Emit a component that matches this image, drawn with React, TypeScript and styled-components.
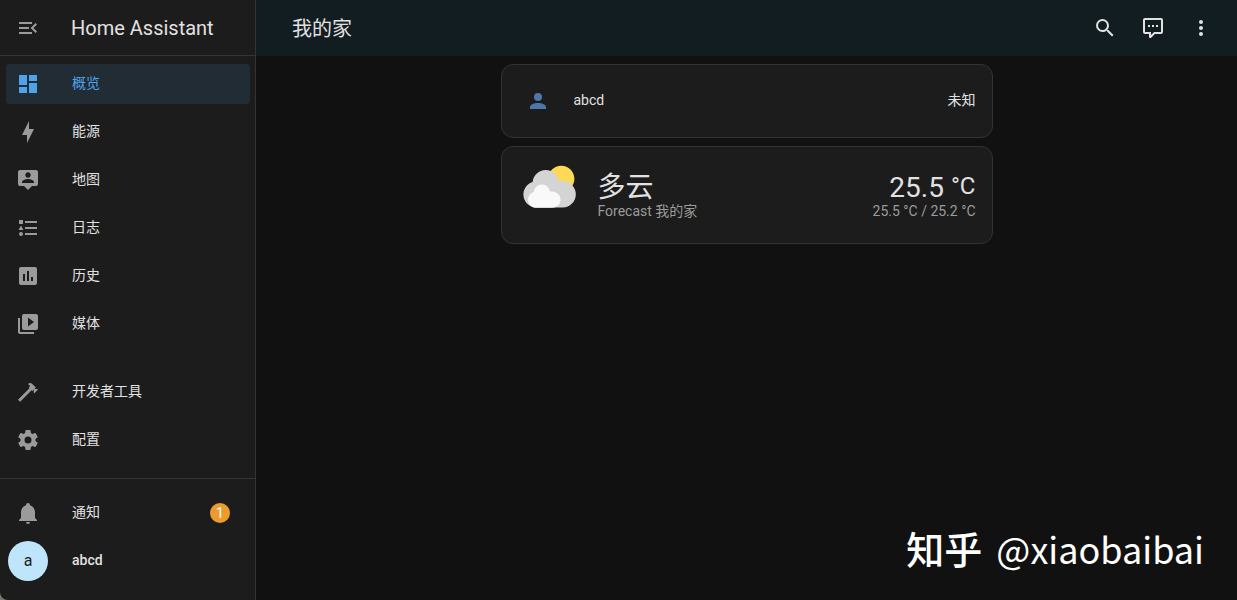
import React from "react";
import styled, { createGlobalStyle } from "styled-components";

const GlobalStyle = createGlobalStyle`
  *, *::before, *::after { box-sizing: border-box; }
  body {
    margin: 0;
    background: #111111;
    color: #e1e1e1;
    font-family: Roboto, "Noto Sans CJK SC", sans-serif;
    font-size: 14px;
    line-height: 20px;
    -webkit-font-smoothing: antialiased;
  }
`;

const icons = {
  menuOpen:
    "M21,15.61L19.59,17L14.58,12L19.59,7L21,8.39L17.44,12L21,15.61M3,6H16V8H3V6M3,13V11H13V13H3M3,18V16H16V18H3Z",
  dashboard: "M13,3V9H21V3M13,21H21V11H13M3,21H11V15H3M3,13H11V3H3V13Z",
  bolt: "M11 15H6L13 1V9H18L11 23V15Z",
  map: "M20,2H4A2,2 0 0,0 2,4V16A2,2 0 0,0 4,18H8L12,22L16,18H20A2,2 0 0,0 22,16V4A2,2 0 0,0 20,2M12,4.3C13.5,4.3 14.7,5.5 14.7,7C14.7,8.5 13.5,9.7 12,9.7C10.5,9.7 9.3,8.5 9.3,7C9.3,5.5 10.5,4.3 12,4.3M18,15H6V14.1C6,12.1 10,11 12,11C14,11 18,12.1 18,14.1V15Z",
  list: "M5,9.5L7.5,14H2.5L5,9.5M3,4H7V8H3V4M5,20A2,2 0 0,0 7,18A2,2 0 0,0 5,16A2,2 0 0,0 3,18A2,2 0 0,0 5,20M9,5V7H21V5H9M9,19H21V17H9V19M9,13H21V11H9V13Z",
  chart:
    "M9 17H7V10H9V17M13 17H11V7H13V17M17 17H15V13H17V17M19 3H5C3.89 3 3 3.89 3 5V19C3 20.1 3.89 21 5 21H19C20.1 21 21 20.1 21 19V5C21 3.89 20.1 3 19 3Z",
  media:
    "M4,6H2V20A2,2 0 0,0 4,22H18V20H4V6M20,2H8A2,2 0 0,0 6,4V16A2,2 0 0,0 8,18H20A2,2 0 0,0 22,16V4A2,2 0 0,0 20,2M12,14.5V5.5L18,10L12,14.5Z",
  hammer:
    "M2 19.63L13.43 8.2L12.72 7.5L14.14 6.07L12 3.89C13.2 2.7 15.09 2.7 16.27 3.89L19.87 7.5L18.45 8.91H21.29L22 9.62L18.45 13.21L17.74 12.5V9.62L16.27 11.04L15.56 10.33L4.13 21.76L2 19.63Z",
  cog: "M12,15.5A3.5,3.5 0 0,1 8.5,12A3.5,3.5 0 0,1 12,8.5A3.5,3.5 0 0,1 15.5,12A3.5,3.5 0 0,1 12,15.5M19.43,12.97C19.47,12.65 19.5,12.33 19.5,12C19.5,11.67 19.47,11.34 19.43,11L21.54,9.37C21.73,9.22 21.78,8.95 21.66,8.73L19.66,5.27C19.54,5.05 19.27,4.96 19.05,5.05L16.56,6.05C16.04,5.66 15.5,5.32 14.87,5.07L14.5,2.42C14.46,2.18 14.25,2 14,2H10C9.75,2 9.54,2.18 9.5,2.42L9.13,5.07C8.5,5.32 7.96,5.66 7.44,6.05L4.95,5.05C4.73,4.96 4.46,5.05 4.34,5.27L2.34,8.73C2.21,8.95 2.27,9.22 2.46,9.37L4.57,11C4.53,11.34 4.5,11.67 4.5,12C4.5,12.33 4.53,12.65 4.57,12.97L2.46,14.63C2.27,14.78 2.21,15.05 2.34,15.27L4.34,18.73C4.46,18.95 4.73,19.03 4.95,18.95L7.44,17.94C7.96,18.34 8.5,18.68 9.13,18.93L9.5,21.58C9.54,21.82 9.75,22 10,22H14C14.25,22 14.46,21.82 14.5,21.58L14.87,18.93C15.5,18.67 16.04,18.34 16.56,17.94L19.05,18.95C19.27,19.03 19.54,18.95 19.66,18.73L21.66,15.27C21.78,15.05 21.73,14.78 21.54,14.63L19.43,12.97Z",
  bell: "M21,19V20H3V19L5,17V11C5,7.9 7.03,5.17 10,4.29C10,4.19 10,4.1 10,4A2,2 0 0,1 12,2A2,2 0 0,1 14,4C14,4.1 14,4.19 14,4.29C16.97,5.17 19,7.9 19,11V17L21,19M14,21A2,2 0 0,1 12,23A2,2 0 0,1 10,21",
  account:
    "M12,4A4,4 0 0,1 16,8A4,4 0 0,1 12,12A4,4 0 0,1 8,8A4,4 0 0,1 12,4M12,14C16.42,14 20,15.79 20,18V20H4V18C4,15.79 7.58,14 12,14Z",
  magnify:
    "M9.5,3A6.5,6.5 0 0,1 16,9.5C16,11.11 15.41,12.59 14.44,13.73L14.71,14H15.5L20.5,19L19,20.5L14,15.5V14.71L13.73,14.44C12.59,15.41 11.11,16 9.5,16A6.5,6.5 0 0,1 3,9.5A6.5,6.5 0 0,1 9.5,3M9.5,5C7,5 5,7 5,9.5C5,12 7,14 9.5,14C12,14 14,12 14,9.5C14,7 12,5 9.5,5Z",
  message:
    "M9,22A1,1 0 0,1 8,21V18H4A2,2 0 0,1 2,16V4C2,2.89 2.9,2 4,2H20A2,2 0 0,1 22,4V16A2,2 0 0,1 20,18H13.9L10.2,21.71C10,21.9 9.75,22 9.5,22H9M10,16V19.08L13.08,16H20V4H4V16H10M17,11H15V9H17V11M13,11H11V9H13V11M9,11H7V9H9V11Z",
  dots: "M12,16A2,2 0 0,1 14,18A2,2 0 0,1 12,20A2,2 0 0,1 10,18A2,2 0 0,1 12,16M12,10A2,2 0 0,1 14,12A2,2 0 0,1 12,14A2,2 0 0,1 10,12A2,2 0 0,1 12,10M12,4A2,2 0 0,1 14,6A2,2 0 0,1 12,8A2,2 0 0,1 10,6A2,2 0 0,1 12,4Z",
};

type IconName = keyof typeof icons;

const Svg = styled.svg`
  display: block;
  flex: none;
  width: 24px;
  height: 24px;
  fill: currentColor;
`;

const Icon = ({ name }: { name: IconName }) => (
  <Svg viewBox="0 0 24 24" aria-hidden="true">
    <path d={icons[name]} />
  </Svg>
);

const Shell = styled.div`
  display: flex;
  min-height: 100vh;
  background: #77756f;
`;

const Sidebar = styled.aside`
  display: flex;
  flex-direction: column;
  flex: none;
  width: 256px;
  background: #1c1c1c;
  border-right: 1px solid #343434;
  border-bottom-left-radius: 8px;
`;

const SidebarHeader = styled.div`
  display: flex;
  align-items: center;
  gap: 19px;
  height: 56px;
  padding: 0 4px;
  border-bottom: 1px solid #343434;
`;

const SidebarTitle = styled.span`
  font-size: 20px;
`;

const IconButton = styled.button<{ $muted?: boolean }>`
  display: flex;
  align-items: center;
  justify-content: center;
  width: 48px;
  height: 48px;
  padding: 0;
  border: 0;
  background: none;
  color: ${(p) => (p.$muted ? "#9b9b9b" : "#e1e1e1")};
  cursor: pointer;
`;

const Nav = styled.nav`
  display: flex;
  flex-direction: column;
  flex: 1;
  gap: 8px;
  padding: 8px 5px 18px 6px;
`;

const Spacer = styled.div`
  flex: 1;
`;

const NavFooter = styled.div`
  display: flex;
  flex-direction: column;
  gap: 8px;
  padding: 14px 5px 19px 6px;
  border-top: 1px solid #343434;
`;

const NavLink = styled.a<{ $active?: boolean }>`
  display: flex;
  align-items: center;
  gap: 32px;
  height: 40px;
  padding: 0 20px 0 10px;
  border-radius: 4px;
  background: ${(p) => (p.$active ? "#222c34" : "transparent")};
  color: ${(p) => (p.$active ? "#4ea3ea" : "#e1e1e1")};
  text-decoration: none;

  ${Svg} {
    color: ${(p) => (p.$active ? "#4ea3ea" : "#9b9b9b")};
  }
`;

const NavLabel = styled.span<{ $strong?: boolean }>`
  flex: 1;
  padding-bottom: 2px;
  font-weight: ${(p) => (p.$strong ? 500 : 400)};
`;

const Badge = styled.span`
  width: 20px;
  height: 20px;
  border-radius: 50%;
  background: #ee9b2d;
  color: #ffffff;
  text-align: center;
`;

const Avatar = styled.span`
  flex: none;
  width: 40px;
  height: 40px;
  margin: 0 -8px;
  border-radius: 50%;
  background: #bfe5fa;
  color: #212121;
  font-size: 16px;
  line-height: 40px;
  text-align: center;
`;

const Main = styled.div`
  flex: 1;
  min-width: 0;
  background: #111111;
`;

const Toolbar = styled.header`
  display: flex;
  align-items: center;
  height: 56px;
  padding: 0 12px 0 36px;
  background: #121d22;
`;

const ToolbarTitle = styled.h1`
  flex: 1;
  margin: 0;
  padding-top: 2px;
  font-size: 20px;
  font-weight: 400;
`;

const Cards = styled.main`
  display: flex;
  flex-direction: column;
  gap: 8px;
  max-width: 508px;
  margin: 0 auto;
  padding: 8px;
`;

const Card = styled.section`
  border: 1px solid #333333;
  border-radius: 12px;
  background: #1c1c1c;
`;

const EntityCard = styled(Card)`
  padding: 16px;
`;

const EntityRow = styled.div`
  display: flex;
  align-items: center;
  height: 40px;
`;

const EntityIcon = styled.span`
  display: flex;
  justify-content: center;
  width: 40px;
  margin-right: 16px;
  color: #4d77a8;
`;

const EntityName = styled.span`
  flex: 1;
  padding-bottom: 2px;
`;

const EntityState = styled.span`
  padding-bottom: 2px;
`;

const WeatherCard = styled(Card)`
  display: flex;
  align-items: flex-start;
  padding: 16px;
`;

const WeatherIcon = styled.svg`
  flex: none;
  width: 64px;
  height: 64px;
  margin-right: 16px;
`;

const WeatherInfo = styled.div<{ $end?: boolean }>`
  flex: 1;
  padding-top: 10px;
  text-align: ${(p) => (p.$end ? "right" : "left")};
`;

const Primary = styled.div`
  height: 30px;
  font-size: 28px;
  line-height: 30px;
`;

const Unit = styled.span`
  font-size: 24px;
  line-height: 26px;
  vertical-align: top;
`;

const Secondary = styled.div`
  color: #9b9b9b;
  line-height: 16px;
`;

const Watermark = styled.div`
  position: absolute;
  right: 33px;
  bottom: 28px;
  display: flex;
  align-items: center;
  gap: 14px;
  color: #ffffff;
  font-family: "Noto Sans CJK SC", sans-serif;
  font-size: 36px;
  line-height: 48px;
`;

const WatermarkBrand = styled.span`
  font-size: 38px;
  font-weight: 500;
`;

const menu: { icon: IconName; label: string }[] = [
  { icon: "dashboard", label: "概览" },
  { icon: "bolt", label: "能源" },
  { icon: "map", label: "地图" },
  { icon: "list", label: "日志" },
  { icon: "chart", label: "历史" },
  { icon: "media", label: "媒体" },
];

const tools: { icon: IconName; label: string }[] = [
  { icon: "hammer", label: "开发者工具" },
  { icon: "cog", label: "配置" },
];

const PartlyCloudy = () => (
  <WeatherIcon viewBox="0 0 17 17" role="img" aria-label="多云">
    <path
      fill="#fdd957"
      d="m14.981 4.2112c0 1.9244-1.56 3.4844-3.484 3.4844-1.9244 0-3.4844-1.56-3.4844-3.4844s1.56-3.484 3.4844-3.484c1.924 0 3.484 1.5596 3.484 3.484"
    />
    <path
      fill="#d4d4d4"
      d="m3.8863 5.035c-0.54892 0.16898-1.04 0.46637-1.4372 0.8636-0.63077 0.63041-1.0206 1.4933-1.0206 2.455 0 1.9251 1.5589 3.4682 3.4837 3.4682h6.9688c1.9251 0 3.484-1.5981 3.484-3.5232 0-1.9251-1.5589-3.5232-3.484-3.5232h-1.0834c-0.25294-1.6916-1.6986-2.9083-3.4463-2.9083-1.7995 0-3.2805 1.4153-3.465 3.1679"
    />
    <path
      fill="#f9f9f9"
      d="m4.1996 7.6995c-0.33902 0.10407-0.64276 0.28787-0.88794 0.5334-0.39017 0.38982-0.63147 0.92322-0.63147 1.5176 0 1.1896 0.96414 2.1431 2.1537 2.1431h4.3071c1.1896 0 2.153-0.98742 2.153-2.1777 0-1.1896-0.96344-2.1777-2.153-2.1777h-0.66992c-0.15593-1.0449-1.0499-1.7974-2.1297-1.7974-1.112 0-2.0274 0.87524-2.1417 1.9586"
    />
  </WeatherIcon>
);

export default function App() {
  return (
    <>
      <GlobalStyle />
      <Shell>
        <Sidebar>
          <SidebarHeader>
            <IconButton $muted aria-label="收起侧边栏">
              <Icon name="menuOpen" />
            </IconButton>
            <SidebarTitle>Home Assistant</SidebarTitle>
          </SidebarHeader>
          <Nav>
            {menu.map((item, i) => (
              <NavLink key={item.label} href="#" $active={i === 0}>
                <Icon name={item.icon} />
                <NavLabel>{item.label}</NavLabel>
              </NavLink>
            ))}
            <Spacer />
            {tools.map((item) => (
              <NavLink key={item.label} href="#">
                <Icon name={item.icon} />
                <NavLabel>{item.label}</NavLabel>
              </NavLink>
            ))}
          </Nav>
          <NavFooter>
            <NavLink href="#">
              <Icon name="bell" />
              <NavLabel>通知</NavLabel>
              <Badge>1</Badge>
            </NavLink>
            <NavLink href="#">
              <Avatar>a</Avatar>
              <NavLabel $strong>abcd</NavLabel>
            </NavLink>
          </NavFooter>
        </Sidebar>
        <Main>
          <Toolbar>
            <ToolbarTitle>我的家</ToolbarTitle>
            <IconButton aria-label="搜索">
              <Icon name="magnify" />
            </IconButton>
            <IconButton aria-label="对话">
              <Icon name="message" />
            </IconButton>
            <IconButton aria-label="更多">
              <Icon name="dots" />
            </IconButton>
          </Toolbar>
          <Cards>
            <EntityCard>
              <EntityRow>
                <EntityIcon>
                  <Icon name="account" />
                </EntityIcon>
                <EntityName>abcd</EntityName>
                <EntityState>未知</EntityState>
              </EntityRow>
            </EntityCard>
            <WeatherCard>
              <PartlyCloudy />
              <WeatherInfo>
                <Primary>多云</Primary>
                <Secondary>Forecast 我的家</Secondary>
              </WeatherInfo>
              <WeatherInfo $end>
                <Primary>
                  25.5 <Unit>°C</Unit>
                </Primary>
                <Secondary>25.5 °C / 25.2 °C</Secondary>
              </WeatherInfo>
            </WeatherCard>
          </Cards>
        </Main>
      </Shell>
      <Watermark>
        <WatermarkBrand>知乎</WatermarkBrand>
        <span>@xiaobaibai</span>
      </Watermark>
    </>
  );
}
